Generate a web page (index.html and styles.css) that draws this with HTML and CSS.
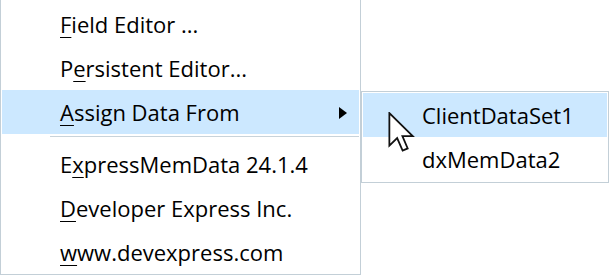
FILE: index.html
```html
<!DOCTYPE html>
<html>
<head>
<meta charset="utf-8">
<link rel="stylesheet" href="styles.css">
</head>
<body>
<div class="screen">
  <div class="menu main">
    <div class="item"><span><u>F</u>ield Editor ...</span></div>
    <div class="item"><span>P<u>e</u>rsistent Editor...</span></div>
    <div class="item active"><span><u>A</u>ssign Data From</span><span class="arrow"></span></div>
    <div class="sep"></div>
    <div class="item"><span>E<u>x</u>pressMemData 24.1.4</span></div>
    <div class="item"><span><u>D</u>eveloper Express Inc.</span></div>
    <div class="item"><span><u>w</u>ww.devexpress.com</span></div>
  </div>
  <div class="menu sub">
    <div class="item active sub-item"><span>ClientDataSet1</span></div>
    <div class="item sub-item"><span>dxMemData2</span></div>
    <svg class="cursor" width="28" height="40" viewBox="0 0 13 19">
      <path d="M0.5,0.5 L0.5,16 L4.2,12.4 L6.8,18.3 L9.2,17.3 L6.7,11.5 L11.6,11.5 Z" fill="#fff" stroke="#111" stroke-width="0.85" stroke-linejoin="miter"/>
    </svg>
  </div>
</div>
</body>
</html>
```

FILE: styles.css
```css
html, body {
  margin: 0;
  padding: 0;
  background: #ffffff;
}
.screen {
  width: 609px;
  height: 276px;
  display: flex;
  align-items: flex-start;
  overflow: hidden;
  font-family: "Open Sans", "Noto Sans", sans-serif;
  font-size: 22px;
  color: #000;
}
.menu {
  box-sizing: border-box;
  background: #fff;
  border: 1px solid #c3cfd7;
  padding: 1px;
}
.main {
  width: 361px;
  border-top: none;
  padding-top: 2px;
  height: 275px;
}
.sub {
  position: relative;
  width: 248px;
  margin-top: 91px;
}
.item {
  height: 44px;
  line-height: 44px;
  display: flex;
  align-items: center;
  padding-left: 58px;
  padding-right: 12px;
  white-space: nowrap;
}
.sub-item {
  padding-left: 59px;
}
.active {
  background: #cce8ff;
}
.item u {
  text-decoration-thickness: 1px;
  text-underline-offset: 4px;
}
.arrow {
  margin-left: auto;
  width: 0;
  height: 0;
  border-top: 6px solid transparent;
  border-bottom: 6px solid transparent;
  border-left: 8px solid #000;
  margin-top: 2px;
}
.sep {
  height: 1px;
  background: #c8d3da;
  margin: 2px 0 5px 48px;
}
.cursor {
  position: absolute;
  left: 26px;
  top: 20px;
}
```
